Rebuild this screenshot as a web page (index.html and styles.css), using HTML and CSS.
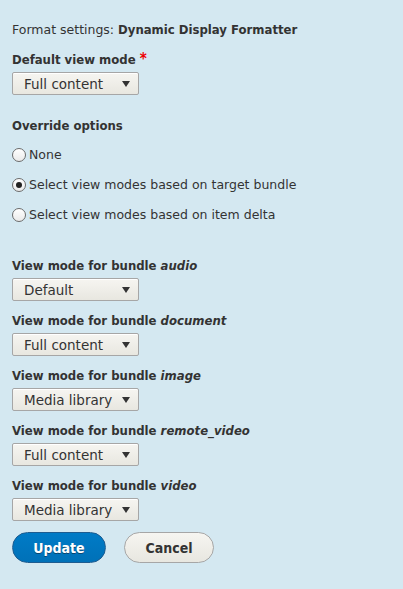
FILE: index.html
```html
<!DOCTYPE html>
<html>
<head>
<meta charset="utf-8">
<link rel="stylesheet" href="styles.css">
</head>
<body>
<form class="settings">
  <div class="title">Format settings: <strong>Dynamic Display Formatter</strong></div>

  <div class="item">
    <label class="label">Default view mode <span class="req">*</span></label>
    <div class="select"><span>Full content</span><i class="arrow"></i></div>
  </div>

  <div class="item options">
    <div class="label">Override options</div>
    <div class="radios">
      <div class="radio"><span class="dot"></span>None</div>
      <div class="radio"><span class="dot on"></span>Select view modes based on target bundle</div>
      <div class="radio"><span class="dot"></span>Select view modes based on item delta</div>
    </div>
  </div>

  <div class="bundles">
    <div class="item">
      <label class="label">View mode for bundle <em>audio</em></label>
      <div class="select"><span>Default</span><i class="arrow"></i></div>
    </div>
    <div class="item">
      <label class="label">View mode for bundle <em>document</em></label>
      <div class="select"><span>Full content</span><i class="arrow"></i></div>
    </div>
    <div class="item">
      <label class="label">View mode for bundle <em>image</em></label>
      <div class="select"><span>Media library</span><i class="arrow"></i></div>
    </div>
    <div class="item">
      <label class="label">View mode for bundle <em>remote_video</em></label>
      <div class="select"><span>Full content</span><i class="arrow"></i></div>
    </div>
    <div class="item">
      <label class="label">View mode for bundle <em>video</em></label>
      <div class="select"><span>Media library</span><i class="arrow"></i></div>
    </div>
  </div>

  <div class="actions">
    <button type="button" class="btn primary">Update</button>
    <button type="button" class="btn">Cancel</button>
  </div>
</form>
</body>
</html>
```
FILE: styles.css
```css
html, body {
  margin: 0;
  padding: 0;
  background: #d4e8f1;
}
body {
  font-family: "DejaVu Sans", "Noto Sans", sans-serif;
  font-size: 12.5px;
  color: #333;
  width: 403px;
  height: 589px;
  overflow: hidden;
}
.settings {
  padding: 21px 12px 0 12px;
}
.title {
  line-height: 18px;
  margin-bottom: 11px;
}
.title strong,
.label,
.btn {
  font-family: "DejaVu Sans Condensed", "DejaVu Sans", sans-serif;
  font-weight: bold;
  font-size: 13px;
}
.item {
  margin-bottom: 11px;
}
.label {
  display: block;
  line-height: 18px;
  margin-bottom: 3px;
}
.label em {
  font-style: italic;
}
.req {
  color: #e00;
  font-size: 15px;
}
.select {
  box-sizing: border-box;
  width: 127px;
  height: 23px;
  border: 1px solid #a6a6a6;
  border-radius: 2px;
  background: linear-gradient(#f6f5f1, #e8e7e0);
  display: flex;
  align-items: center;
  padding: 0 8px 0 11px;
  justify-content: space-between;
  box-shadow: inset 0 1px 0 #fff;
  font-size: 13.5px;
}
.arrow {
  width: 0;
  height: 0;
  border-left: 4px solid transparent;
  border-right: 4px solid transparent;
  border-top: 6px solid #333;
}
.options {
  margin-top: 22px;
}
.radios {
  margin-top: 11px;
  display: flex;
  flex-direction: column;
  gap: 12px;
}
.radio {
  display: flex;
  align-items: center;
  line-height: 18px;
}
.dot {
  box-sizing: border-box;
  width: 14px;
  height: 14px;
  border-radius: 50%;
  border: 1px solid #6b6b6b;
  background: linear-gradient(#fff, #eaeaea);
  margin-right: 3px;
  position: relative;
}
.dot.on::after {
  content: "";
  position: absolute;
  left: 3px;
  top: 3px;
  width: 6px;
  height: 6px;
  border-radius: 50%;
  background: #222;
}
.bundles {
  margin-top: 33px;
}
.actions {
  display: flex;
  gap: 18px;
  margin-top: 5px;
}
.btn {
  font-size: 14px;
  height: 31px;
  border-radius: 20px;
  border: 1px solid #a6a6a6;
  background: linear-gradient(#f6f5f1, #e8e7e0);
  color: #333;
  padding: 0;
  width: 90px;
}
.btn.primary {
  width: 94px;
  border-color: #1e5c90;
  background: linear-gradient(#007bc6, #0071b8);
  color: #fff;
  text-shadow: 0 1px 0 #0a4670;
}
```
